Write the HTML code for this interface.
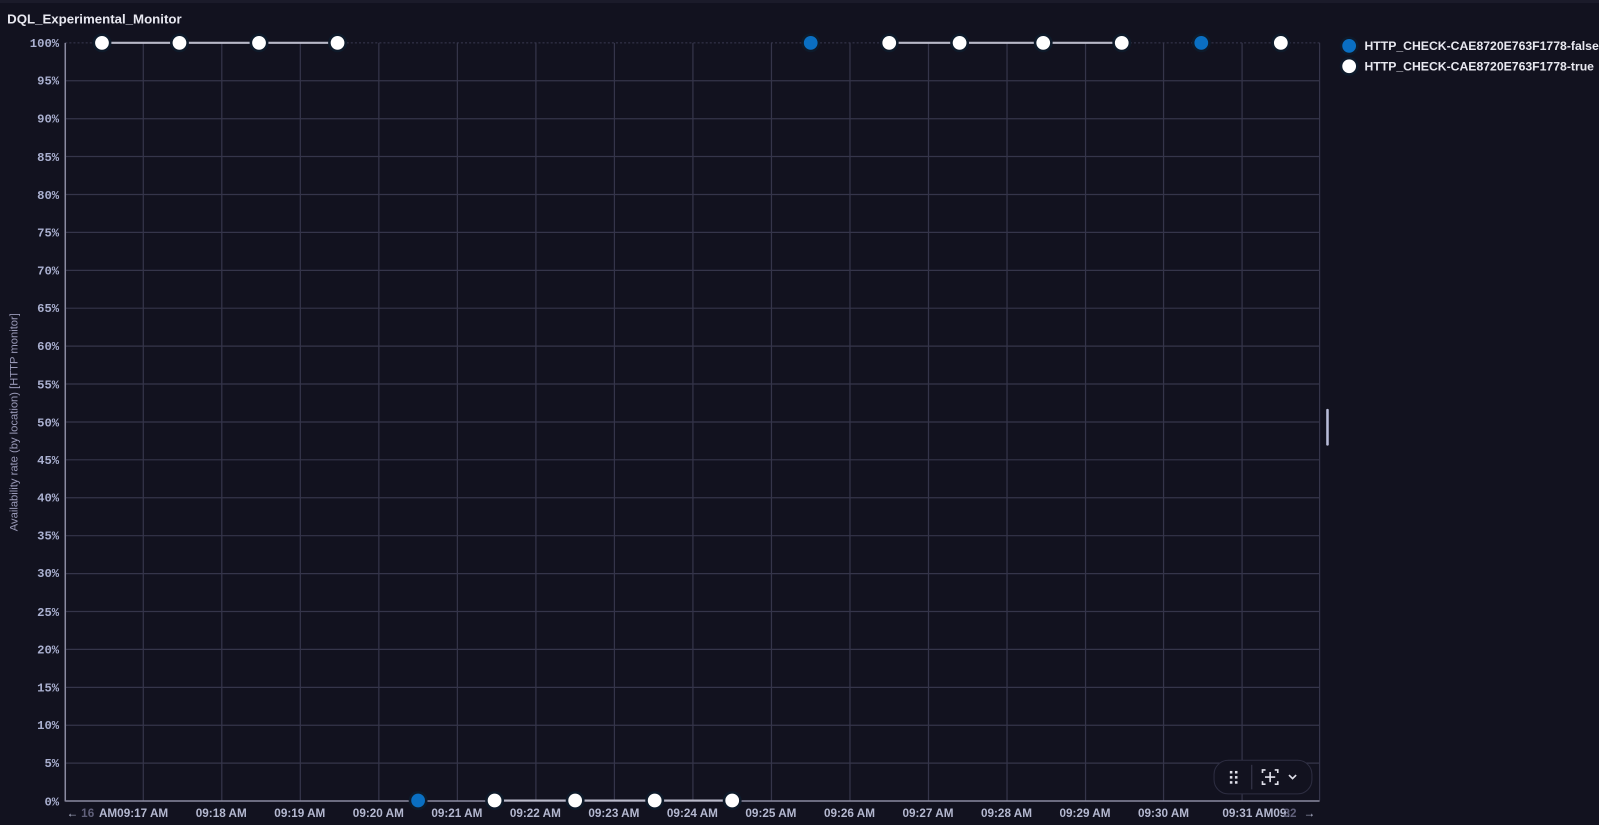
<!DOCTYPE html>
<html><head><meta charset="utf-8"><style>
html,body{margin:0;padding:0;background:#12121f;width:1599px;height:825px;overflow:hidden;font-family:"Liberation Sans",sans-serif;}
</style></head><body>
<svg width="1599" height="825" viewBox="0 0 1568 809" preserveAspectRatio="none" xmlns="http://www.w3.org/2000/svg" style="display:block">
<rect width="1568" height="809" fill="#12121f"/>
<rect x="0" y="0" width="1568" height="3" fill="#1b1b2a"/>
<text x="7" y="23" fill="#e8e8f0" font-size="13" font-weight="bold">DQL_Experimental_Monitor</text>
<g stroke="#35354a" stroke-width="1.2">
<line x1="64" y1="79.2" x2="1294" y2="79.2"/><line x1="64" y1="116.4" x2="1294" y2="116.4"/><line x1="64" y1="153.5" x2="1294" y2="153.5"/><line x1="64" y1="190.7" x2="1294" y2="190.7"/><line x1="64" y1="227.9" x2="1294" y2="227.9"/><line x1="64" y1="265.1" x2="1294" y2="265.1"/><line x1="64" y1="302.2" x2="1294" y2="302.2"/><line x1="64" y1="339.4" x2="1294" y2="339.4"/><line x1="64" y1="376.6" x2="1294" y2="376.6"/><line x1="64" y1="413.8" x2="1294" y2="413.8"/><line x1="64" y1="450.9" x2="1294" y2="450.9"/><line x1="64" y1="488.1" x2="1294" y2="488.1"/><line x1="64" y1="525.3" x2="1294" y2="525.3"/><line x1="64" y1="562.5" x2="1294" y2="562.5"/><line x1="64" y1="599.6" x2="1294" y2="599.6"/><line x1="64" y1="636.8" x2="1294" y2="636.8"/><line x1="64" y1="674.0" x2="1294" y2="674.0"/><line x1="64" y1="711.2" x2="1294" y2="711.2"/><line x1="64" y1="748.3" x2="1294" y2="748.3"/>
<line x1="140.5" y1="42" x2="140.5" y2="785"/><line x1="217.5" y1="42" x2="217.5" y2="785"/><line x1="294.5" y1="42" x2="294.5" y2="785"/><line x1="371.5" y1="42" x2="371.5" y2="785"/><line x1="448.5" y1="42" x2="448.5" y2="785"/><line x1="525.5" y1="42" x2="525.5" y2="785"/><line x1="602.5" y1="42" x2="602.5" y2="785"/><line x1="679.5" y1="42" x2="679.5" y2="785"/><line x1="756.5" y1="42" x2="756.5" y2="785"/><line x1="833.5" y1="42" x2="833.5" y2="785"/><line x1="910.5" y1="42" x2="910.5" y2="785"/><line x1="987.5" y1="42" x2="987.5" y2="785"/><line x1="1064.5" y1="42" x2="1064.5" y2="785"/><line x1="1141" y1="42" x2="1141" y2="785"/><line x1="1218" y1="42" x2="1218" y2="785"/><line x1="1294" y1="42" x2="1294" y2="785"/>
</g>
<line x1="64" y1="42" x2="1294" y2="42" stroke="#3a3a50" stroke-width="1" stroke-dasharray="2,2"/>
<line x1="64" y1="42" x2="64" y2="786" stroke="#8a8aa0" stroke-width="1.5"/>
<line x1="64" y1="785.5" x2="1294" y2="785.5" stroke="#8a8aa0" stroke-width="1.5"/>
<g fill="#aab0d0" font-size="12" font-family="Liberation Mono, monospace" text-anchor="end" font-weight="bold">
<text x="58" y="46">100%</text><text x="58" y="83">95%</text><text x="58" y="120">90%</text><text x="58" y="158">85%</text><text x="58" y="195">80%</text><text x="58" y="232">75%</text><text x="58" y="269">70%</text><text x="58" y="306">65%</text><text x="58" y="343">60%</text><text x="58" y="381">55%</text><text x="58" y="418">50%</text><text x="58" y="455">45%</text><text x="58" y="492">40%</text><text x="58" y="529">35%</text><text x="58" y="566">30%</text><text x="58" y="604">25%</text><text x="58" y="641">20%</text><text x="58" y="678">15%</text><text x="58" y="715">10%</text><text x="58" y="752">5%</text><text x="58" y="790">0%</text>
</g>
<text transform="translate(17,414) rotate(-90)" fill="#9a9ab8" font-size="11" text-anchor="middle">Availability rate (by location) [HTTP monitor]</text>
<g fill="#b4b8d0" font-size="11.5" font-weight="bold" text-anchor="middle">
<text x="71" y="801">←</text>
<text x="86" y="801" fill="#60607a">16</text>
<text x="131" y="801">AM09:17 AM</text>
<text x="217" y="801">09:18 AM</text><text x="294" y="801">09:19 AM</text><text x="371" y="801">09:20 AM</text><text x="448" y="801">09:21 AM</text><text x="525" y="801">09:22 AM</text><text x="602" y="801">09:23 AM</text><text x="679" y="801">09:24 AM</text><text x="756" y="801">09:25 AM</text><text x="833" y="801">09:26 AM</text><text x="910" y="801">09:27 AM</text><text x="987" y="801">09:28 AM</text><text x="1064" y="801">09:29 AM</text><text x="1141" y="801">09:30 AM</text>
<text x="1232" y="801">09:31 AM09:</text>
<text x="1265" y="801" fill="#60607a">32</text>
<text x="1284" y="801">→</text>
</g>
<g stroke="#b8b8c8" stroke-width="2">
<line x1="100" y1="42" x2="331" y2="42"/><line x1="872" y1="42" x2="1100" y2="42"/><line x1="485" y1="785" x2="718" y2="785"/>
</g>
<g stroke="#0e1a2a" stroke-width="2.5">
<g fill="#ffffff"><circle cx="100" cy="42" r="8"/><circle cx="176" cy="42" r="8"/><circle cx="254" cy="42" r="8"/><circle cx="331" cy="42" r="8"/><circle cx="872" cy="42" r="8"/><circle cx="941" cy="42" r="8"/><circle cx="1023" cy="42" r="8"/><circle cx="1100" cy="42" r="8"/><circle cx="1256" cy="42" r="8"/><circle cx="485" cy="785" r="8"/><circle cx="564" cy="785" r="8"/><circle cx="642" cy="785" r="8"/><circle cx="718" cy="785" r="8"/></g>
<g fill="#0a6fc2"><circle cx="795" cy="42" r="8"/><circle cx="1178" cy="42" r="8"/><circle cx="410" cy="785" r="8"/></g>
</g>
<g stroke="#0e1a2a" stroke-width="2.5">
<circle cx="1323" cy="45" r="8" fill="#0a6fc2"/><circle cx="1323" cy="65" r="8" fill="#ffffff"/>
</g>
<g fill="#e8e8f0" font-size="12" font-weight="bold">
<text x="1338" y="49">HTTP_CHECK-CAE8720E763F1778-false</text>
<text x="1338" y="69">HTTP_CHECK-CAE8720E763F1778-true</text>
</g>
<rect x="1300.5" y="401" width="2.5" height="36" rx="1" fill="#b8bcd8"/>
<rect x="1190.5" y="745.5" width="96" height="33" rx="14" fill="#12121f" stroke="#2e2e42"/>
<g fill="#e0e0ea"><rect x="1206" y="756" width="2.5" height="2.5"/><rect x="1211" y="756" width="2.5" height="2.5"/><rect x="1206" y="761" width="2.5" height="2.5"/><rect x="1211" y="761" width="2.5" height="2.5"/><rect x="1206" y="766" width="2.5" height="2.5"/><rect x="1211" y="766" width="2.5" height="2.5"/></g>
<line x1="1227.5" y1="750" x2="1227.5" y2="774" stroke="#3a3a50"/>
<g stroke="#e0e0ea" stroke-width="1.6" fill="none">
<path d="M1238 758v-3h3M1250 755h3v3M1253 766v3h-3M1241 769h-3v-3"/>
<path d="M1245.5 757v10M1240.5 762h10"/>
<path d="M1264 760l3.5 3.5 3.5-3.5"/>
</g>
</svg>
</body></html>
